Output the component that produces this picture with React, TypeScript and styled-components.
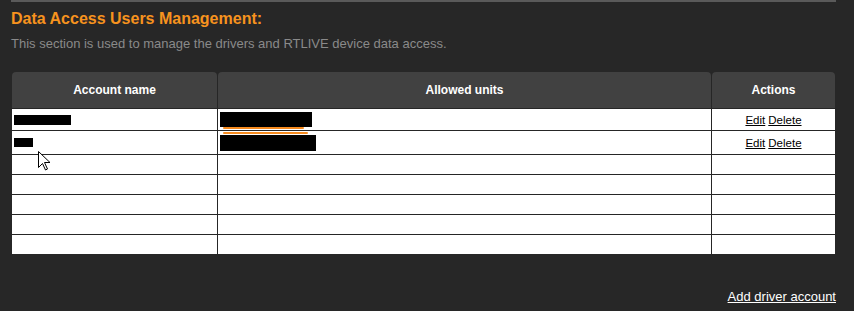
import React from "react";
import styled, { createGlobalStyle } from "styled-components";

const Global = createGlobalStyle`
  html, body { margin: 0; padding: 0; background: #272727; }
  body { font-family: "Liberation Sans", Arial, sans-serif; width: 854px; height: 311px; overflow: hidden; }
`;

const Page = styled.div`
  position: relative;
  padding: 0 19px 0 12px;
  height: 311px;
  box-sizing: border-box;
`;

const Rule = styled.div`
  height: 2px;
  background: #5a5a5a;
  margin-left: -1px;
  width: 825px;
`;

const Title = styled.h2`
  margin: 7px 0 0 -1px;
  font-size: 16px;
  line-height: 19px;
  font-weight: bold;
  color: #f7931e;
`;

const Subtitle = styled.p`
  margin: 8px 0 0 -1px;
  font-size: 13px;
  line-height: 15px;
  color: #8a8a8a;
`;

const Grid = styled.div`
  margin-top: 21px;
  display: grid;
  grid-template-columns: 205px 1fr 123px;
  gap: 1px;
  background: #262626;
  width: 823px;
`;

const HeadCell = styled.div`
  background: #414141;
  color: #fff;
  font-weight: bold;
  font-size: 12px;
  height: 36px;
  display: flex;
  align-items: center;
  justify-content: center;
  border-radius: 4px 4px 0 0;
`;

const Cell = styled.div<{ $h: number; $center?: boolean }>`
  background: #fff;
  height: ${(p) => p.$h}px;
  display: flex;
  align-items: center;
  justify-content: ${(p) => (p.$center ? "center" : "flex-start")};
  padding: 0 2px;
  font-size: 11px;
  color: #000;
  box-sizing: border-box;
  gap: 4px;
`;

const Redact = styled.span<{ $w: number; $h: number; $line?: "under" | "over" }>`
  position: relative;
  display: inline-block;
  width: ${(p) => p.$w}px;
  height: ${(p) => p.$h}px;
  background: #000;
  &::after {
    content: ${(p) => (p.$line ? "''" : "none")};
    position: absolute;
    left: 3px;
    right: 8px;
    height: 2px;
    background: #f68b1f;
    border-radius: 2px;
    ${(p) => (p.$line === "under" ? "bottom: -2px;" : "top: -3px;")}
  }
`;

const ActionLink = styled.a`
  color: #000;
  text-decoration: underline;
  font-size: 11.5px;
  cursor: pointer;
`;

const Footer = styled.div`
  display: flex;
  justify-content: flex-end;
  margin-top: 35px;
`;

const AddLink = styled.a`
  color: #fff;
  text-decoration: underline;
  font-size: 13px;
  margin-right: -1px;
`;

const Cursor = styled.svg`
  position: absolute;
  left: 38px;
  top: 151px;
`;

const rows: { h: number; a?: React.ReactNode; b?: React.ReactNode; act?: boolean }[] = [
  { h: 21, a: <Redact $w={57} $h={10} />, b: <Redact $w={92} $h={15} $line="under" />, act: true },
  { h: 23, a: <Redact $w={19} $h={9} />, b: <Redact $w={96} $h={16} $line="over" />, act: true },
  { h: 19 },
  { h: 19 },
  { h: 19 },
  { h: 19 },
  { h: 19 },
];

export default function App() {
  return (
    <>
      <Global />
      <Page>
        <Rule />
        <Title>Data Access Users Management:</Title>
        <Subtitle>This section is used to manage the drivers and RTLIVE device data access.</Subtitle>
        <Grid>
          <HeadCell>Account name</HeadCell>
          <HeadCell>Allowed units</HeadCell>
          <HeadCell>Actions</HeadCell>
          {rows.map((r, i) => (
            <React.Fragment key={i}>
              <Cell $h={r.h}>{r.a}</Cell>
              <Cell $h={r.h}>{r.b}</Cell>
              <Cell $h={r.h} $center>
                {r.act && (
                  <>
                    <ActionLink>Edit</ActionLink>
                    <ActionLink style={{ marginLeft: -1 }}>Delete</ActionLink>
                  </>
                )}
              </Cell>
            </React.Fragment>
          ))}
        </Grid>
        <Footer>
          <AddLink>Add driver account</AddLink>
        </Footer>
        <Cursor width="13" height="20" viewBox="0 0 13 20">
          <path
            d="M0.5 0.5 L0.5 16.5 L4.5 12.5 L7.5 19 L9.5 18 L6.5 11.5 L12 11.5 Z"
            fill="#fff"
            stroke="#000"
            strokeWidth="1"
            strokeLinejoin="miter"
          />
        </Cursor>
      </Page>
    </>
  );
}
